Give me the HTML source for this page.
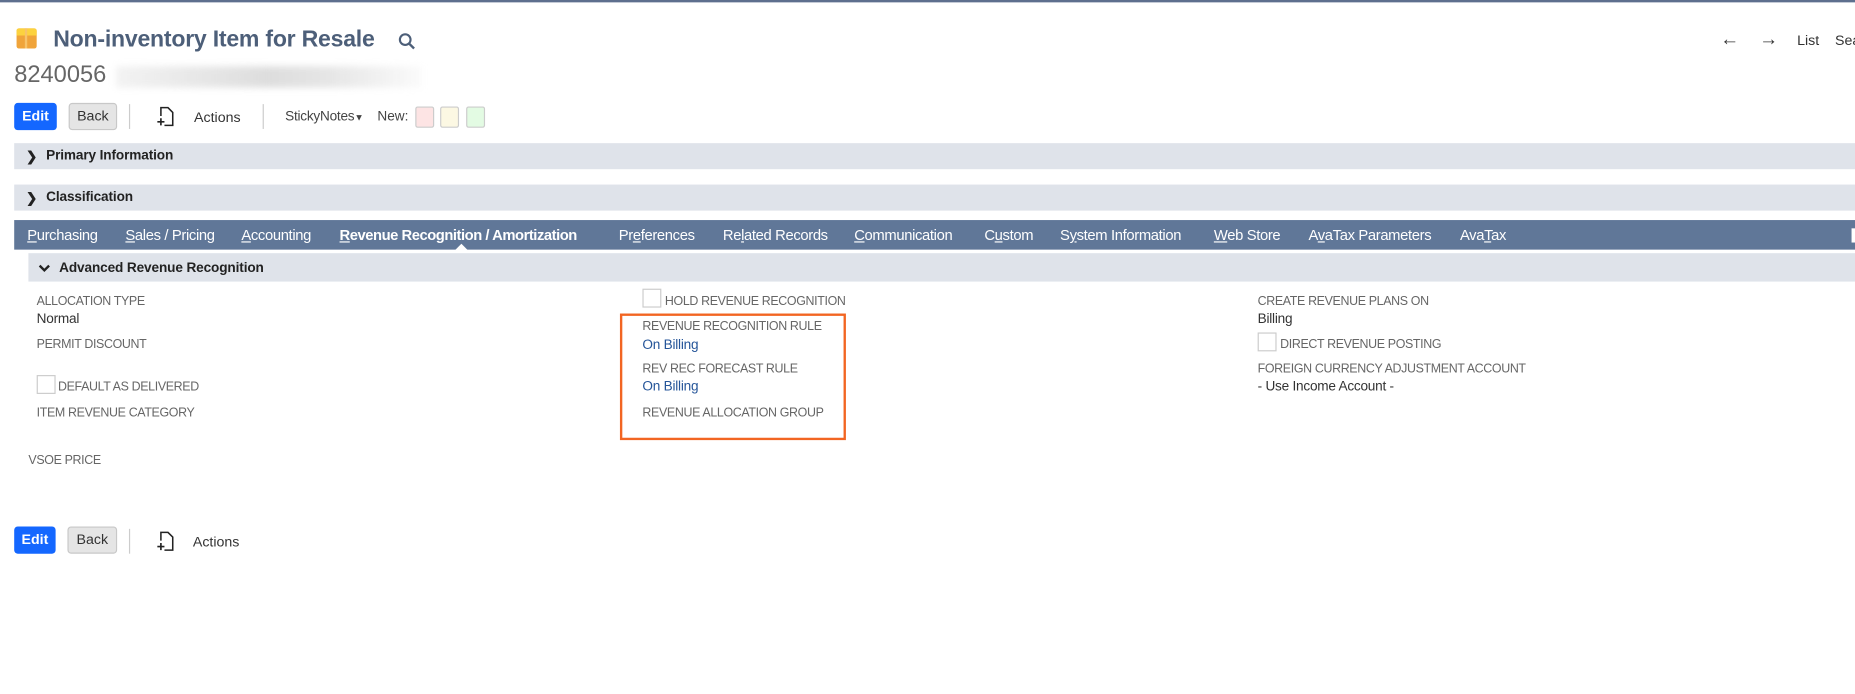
<!DOCTYPE html>
<html><head><meta charset="utf-8"><style>
html,body{margin:0;padding:0;background:#fff;overflow:hidden;width:1855px;height:694px}
#w{position:absolute;left:0;top:0;width:1568px;height:587px;transform:scale(1.1831);transform-origin:0 0;font-family:"Liberation Sans",sans-serif;color:#333}
.a{position:absolute;white-space:nowrap}
.c{transform:translateY(-50%)}
.lbl{font-size:10.5px;color:#666;letter-spacing:-0.3px}
.val{font-size:11.5px;color:#333;letter-spacing:-0.2px}
.blue{color:#255599}
.bar{position:absolute;background:#dfe3ea;height:22px}
.bt{position:absolute;font-size:11.5px;font-weight:bold;color:#222;letter-spacing:-0.1px}
.cb{position:absolute;width:14px;height:14px;border:1px solid #ccc;background:#fff}
.tab{position:absolute;top:199px;transform:translateY(-50%);color:#fff;font-size:12.5px;white-space:nowrap;letter-spacing:-0.3px}
.tab u{text-decoration:underline}
.btn{position:absolute;height:23px;border-radius:3px;font-size:12px;line-height:23px;text-align:center}
</style></head><body><div id="w">
<div class="a" style="left:0;top:0;width:1568px;height:2px;background:#5e6f8e"></div>
<div class="a" style="left:14px;top:24px;width:17px;height:17px;background:#f0a43a;border-radius:2px"></div>
<div class="a" style="left:14px;top:24px;width:17px;height:6px;background:#fcd23e;border-radius:2px 2px 0 0"></div>
<div class="a" style="left:21px;top:24px;width:2px;height:17px;background:#f7c36a"></div>
<div class="a c" style="left:45px;top:34px;font-size:19.5px;font-weight:bold;color:#4d5f79;letter-spacing:-0.2px">Non-inventory Item for Resale</div>
<svg class="a" style="left:336px;top:27px" width="16" height="16" viewBox="0 0 16 16"><circle cx="6.5" cy="6.5" r="4.5" fill="none" stroke="#4d5f79" stroke-width="1.8"/><line x1="10" y1="10" x2="14" y2="14" stroke="#4d5f79" stroke-width="2"/></svg>
<div class="a c" style="left:12px;top:64px;font-size:20px;color:#666">8240056</div>
<div class="a" style="left:98px;top:56px;width:258px;height:18px;background:linear-gradient(90deg,rgba(235,235,235,.6),#ddd 50%,#e6e6e6 70%,rgba(240,240,240,.3));filter:blur(3px)"></div>
<div class="a c" style="left:1454px;top:34px;font-size:16px;font-weight:bold;color:#333">&#8592;</div>
<div class="a c" style="left:1487px;top:34px;font-size:16px;font-weight:bold;color:#333">&#8594;</div>
<div class="a c" style="left:1519px;top:34px;font-size:12px;color:#333">List</div>
<div class="a c" style="left:1551px;top:34px;font-size:12px;color:#333">Search</div>
<div class="btn" style="left:12px;top:87px;width:36px;background:#1467ff;color:#fff;font-weight:bold">Edit</div>
<div class="btn" style="left:58px;top:87px;width:39px;background:#e5e5e5;border:1px solid #c8c8c8;height:21px;line-height:21px;color:#333">Back</div>
<div class="a" style="left:109px;top:88px;width:1px;height:21px;background:#ccc"></div>
<svg class="a" style="left:132px;top:90px" width="16" height="18" viewBox="0 0 16 18"><path d="M4 8V1h6l4 4v11H7" fill="none" stroke="#222" stroke-width="1.3"/><path d="M1 13h6M4 10v6" stroke="#222" stroke-width="1.4"/></svg>
<div class="a c" style="left:164px;top:99px;font-size:12px">Actions</div>
<div class="a" style="left:222px;top:88px;width:1px;height:21px;background:#ccc"></div>
<div class="a c" style="left:241px;top:99px;font-size:11.5px;color:#444;letter-spacing:-0.2px">StickyNotes<span style="font-size:8px">&#9660;</span></div>
<div class="a c" style="left:319px;top:99px;font-size:11.5px;color:#444">New:</div>
<div class="a" style="left:351px;top:90px;width:14px;height:16px;background:#fde4e4;border:1px solid #ccc;border-radius:2px"></div>
<div class="a" style="left:372px;top:90px;width:14px;height:16px;background:#fcf8e3;border:1px solid #ccc;border-radius:2px"></div>
<div class="a" style="left:394px;top:90px;width:14px;height:16px;background:#e3fbe3;border:1px solid #ccc;border-radius:2px"></div>
<div class="bar" style="left:12px;top:121px;width:1556px"></div>
<div class="bt c" style="left:22px;top:132px">&#10095;</div>
<div class="bt c" style="left:39px;top:132px">Primary Information</div>
<div class="bar" style="left:12px;top:156px;width:1556px"></div>
<div class="bt c" style="left:22px;top:167px">&#10095;</div>
<div class="bt c" style="left:39px;top:167px">Classification</div>
<div class="a" style="left:12px;top:186px;width:1556px;height:25px;background:#607798"></div>
<div class="tab" style="left:23px"><u>P</u>urchasing</div>
<div class="tab" style="left:106px"><u>S</u>ales / Pricing</div>
<div class="tab" style="left:204px"><u>A</u>ccounting</div>
<div class="tab" style="left:287px;font-weight:bold;letter-spacing:-0.4px"><u>R</u>evenue Recognition / Amortization</div>
<div class="tab" style="left:523px">Pr<u>e</u>ferences</div>
<div class="tab" style="left:611px">Re<u>l</u>ated Records</div>
<div class="tab" style="left:722px"><u>C</u>ommunication</div>
<div class="tab" style="left:832px">C<u>u</u>stom</div>
<div class="tab" style="left:896px">S<u>y</u>stem Information</div>
<div class="tab" style="left:1026px"><u>W</u>eb Store</div>
<div class="tab" style="left:1106px">A<u>v</u>aTax Parameters</div>
<div class="tab" style="left:1234px">Ava<u>T</u>ax</div>
<div class="a" style="left:1565px;top:193px;width:3px;height:12px;background:#fff"></div>
<div class="a" style="left:384px;top:206px;width:0;height:0;border-left:6px solid transparent;border-right:6px solid transparent;border-bottom:6px solid #fff"></div>
<div class="bar" style="left:24px;top:214px;width:1544px;height:24px"></div>
<svg class="a" style="left:32px;top:222px" width="11" height="9" viewBox="0 0 11 9"><path d="M1.5 2.5l4 4 4-4" fill="none" stroke="#222" stroke-width="2"/></svg>
<div class="bt c" style="left:50px;top:227px">Advanced Revenue Recognition</div>
<div class="a c lbl" style="left:31px;top:255px">ALLOCATION TYPE</div>
<div class="a c val" style="left:31px;top:270px">Normal</div>
<div class="a c lbl" style="left:31px;top:291px">PERMIT DISCOUNT</div>
<div class="cb" style="left:31px;top:317px"></div>
<div class="a c lbl" style="left:49px;top:327px">DEFAULT AS DELIVERED</div>
<div class="a c lbl" style="left:31px;top:349px">ITEM REVENUE CATEGORY</div>
<div class="a c lbl" style="left:24px;top:389px">VSOE PRICE</div>
<div class="cb" style="left:543px;top:244px"></div>
<div class="a c lbl" style="left:562px;top:255px">HOLD REVENUE RECOGNITION</div>
<div class="a c lbl" style="left:543px;top:276px">REVENUE RECOGNITION RULE</div>
<div class="a c val blue" style="left:543px;top:292px">On Billing</div>
<div class="a c lbl" style="left:543px;top:312px">REV REC FORECAST RULE</div>
<div class="a c val blue" style="left:543px;top:327px">On Billing</div>
<div class="a c lbl" style="left:543px;top:349px">REVENUE ALLOCATION GROUP</div>
<div class="a" style="left:524px;top:265px;width:187px;height:103px;border:2px solid #f26522"></div>
<div class="a c lbl" style="left:1063px;top:255px">CREATE REVENUE PLANS ON</div>
<div class="a c val" style="left:1063px;top:270px">Billing</div>
<div class="cb" style="left:1063px;top:281px"></div>
<div class="a c lbl" style="left:1082px;top:291px">DIRECT REVENUE POSTING</div>
<div class="a c lbl" style="left:1063px;top:312px">FOREIGN CURRENCY ADJUSTMENT ACCOUNT</div>
<div class="a c val" style="left:1063px;top:327px">- Use Income Account -</div>
<div class="btn" style="left:12px;top:445px;width:35px;background:#1467ff;color:#fff;font-weight:bold">Edit</div>
<div class="btn" style="left:57px;top:445px;width:40px;background:#e5e5e5;border:1px solid #c8c8c8;height:21px;line-height:21px;color:#333">Back</div>
<div class="a" style="left:109px;top:447px;width:1px;height:21px;background:#ccc"></div>
<svg class="a" style="left:132px;top:449px" width="16" height="18" viewBox="0 0 16 18"><path d="M4 8V1h6l4 4v11H7" fill="none" stroke="#222" stroke-width="1.3"/><path d="M1 13h6M4 10v6" stroke="#222" stroke-width="1.4"/></svg>
<div class="a c" style="left:163px;top:458px;font-size:12px">Actions</div>
</div></body></html>
